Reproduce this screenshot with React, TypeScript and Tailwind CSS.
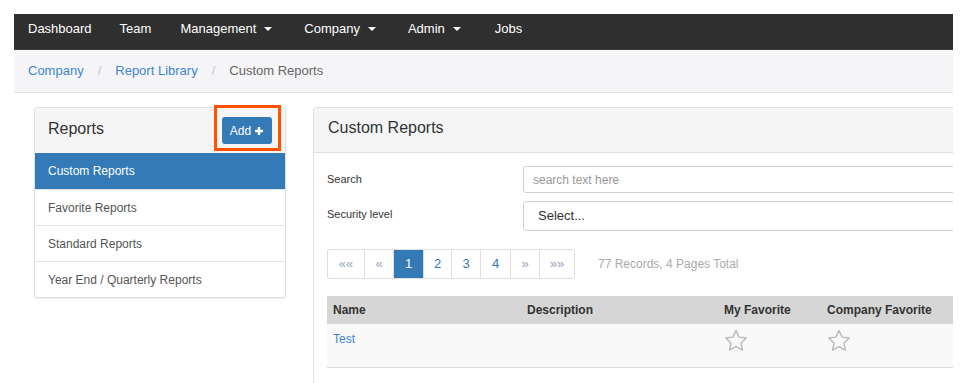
import { ReactNode } from 'react';

const font = { fontFamily: '"Liberation Sans", Arial, sans-serif' };

function Caret() {
  return (
    <span className="ml-[8px] inline-block h-0 w-0 border-x-[4px] border-t-[4px] border-x-transparent border-t-white align-middle" />
  );
}

function NavItem({ children, caret = false, className = '' }: { children: ReactNode; caret?: boolean; className?: string }) {
  return (
    <span className={`flex items-center text-[13px] text-white ${className}`}>
      {children}
      {caret && <Caret />}
    </span>
  );
}

function Star() {
  return (
    <svg width="24" height="22" viewBox="0 0 24 22" fill="none">
      <path
        d="M12 1.5l3.1 6.6 7.2.9-5.3 5 1.4 7.1L12 17.6l-6.4 3.5L7 14l-5.3-5 7.2-.9z"
        stroke="#b9b9b9"
        strokeWidth="1.4"
        strokeLinejoin="round"
      />
    </svg>
  );
}

const pages = [
  { label: '««', w: 'w-[36px]', kind: 'arrow' },
  { label: '«', w: 'w-[29px]', kind: 'arrow' },
  { label: '1', w: 'w-[30px]', kind: 'active' },
  { label: '2', w: 'w-[28px]', kind: 'num' },
  { label: '3', w: 'w-[29px]', kind: 'num' },
  { label: '4', w: 'w-[30px]', kind: 'num' },
  { label: '»', w: 'w-[29px]', kind: 'arrow' },
  { label: '»»', w: 'w-[35px]', kind: 'arrow' },
];

const sideItems = ['Custom Reports', 'Favorite Reports', 'Standard Reports', 'Year End / Quarterly Reports'];

export default function App() {
  return (
    <div className="h-[383px] w-[977px] overflow-hidden bg-white" style={font}>
      <div className="ml-[14px] mt-[14px] w-[939px] overflow-hidden">
        {/* top nav */}
        <div className="flex h-[36px] items-start border-b border-[#3c3c3c] bg-[#2f2f2f] pl-[14px] pt-[5px]">
          <NavItem>Dashboard</NavItem>
          <NavItem className="ml-[28px]">Team</NavItem>
          <NavItem className="ml-[29px]" caret>Management</NavItem>
          <NavItem className="ml-[32px]" caret>Company</NavItem>
          <NavItem className="ml-[32px]" caret>Admin</NavItem>
          <NavItem className="ml-[34px]">Jobs</NavItem>
        </div>

        {/* breadcrumb */}
        <div className="flex h-[43px] items-center border-b border-[#e2e2e4] bg-[#f5f5f7] pl-[14px] text-[13px]">
          <span className="text-[#3d85d6]">Company</span>
          <span className="px-[14px] text-[#c8c8c8]">/</span>
          <span className="text-[#3d85d6]">Report Library</span>
          <span className="px-[14px] text-[#c8c8c8]">/</span>
          <span className="text-[#666]">Custom Reports</span>
        </div>

        <div className="flex items-start pl-[20px] pt-[14px]">
          {/* left panel */}
          <div className="w-[252px] shrink-0 rounded-[3px] border border-[#e0e0e0] shadow-[0_1px_2px_rgba(0,0,0,0.08)]">
            <div className="relative flex h-[45px] items-center justify-between rounded-t-[3px] bg-[#f5f5f5] pb-[4px] pl-[13px] pr-[13px]">
              <span className="text-[16px] text-[#333]">Reports</span>
              <button className="mt-[4px] flex h-[27px] w-[50px] items-center justify-center gap-[3px] rounded-[3px] bg-[#337ab7] text-[12px] text-white">
                Add
                <svg width="10" height="10" viewBox="0 0 10 10">
                  <path d="M5 1v8M1 5h8" stroke="white" strokeWidth="2.4" />
                </svg>
              </button>
              <div className="absolute right-[4px] top-[-3px] h-[46px] w-[67px] border-[3px] border-[#ff5100]" />
            </div>
            {sideItems.map((item, i) => (
              <div
                key={item}
                className={`flex items-center pl-[13px] text-[12px] ${
                  i === 0
                    ? 'h-[36px] bg-[#337ab7] text-white'
                    : 'h-[36px] border-t border-[#e4e4e4] bg-white text-[#555]'
                } ${i === sideItems.length - 1 ? 'rounded-b-[3px]' : ''}`}
              >
                {item}
              </div>
            ))}
          </div>

          {/* right panel */}
          <div className="ml-[27px] h-[300px] w-[700px] shrink-0 rounded-[3px] border border-[#e0e0e0]">
            <div className="flex h-[45px] items-center border-b border-[#e0e0e0] bg-[#f5f5f5] pb-[4px] pl-[14px]">
              <span className="text-[16px] text-[#333]">Custom Reports</span>
            </div>
            <div className="pl-[13px] pt-[13px]">
              <div className="flex h-[27px] items-center">
                <span className="w-[196px] text-[11px] text-[#333]">Search</span>
                <div className="flex h-[27px] flex-1 items-center rounded-[3px] border border-[#d0d0d0] pl-[9px] text-[12px] text-[#999]">
                  search text here
                </div>
              </div>
              <div className="mt-[8px] flex h-[30px] items-center">
                <span className="mb-[4px] w-[196px] text-[11px] text-[#333]">Security level</span>
                <div className="flex h-[30px] flex-1 items-center rounded-[3px] border border-[#d0d0d0] pl-[14px] text-[13px] text-[#333]">
                  Select...
                </div>
              </div>

              <div className="mt-[18px] flex items-center">
                <div className="flex h-[30px] rounded-[3px] border border-[#dedede]">
                  {pages.map((p, i) => (
                    <div
                      key={i}
                      className={`flex items-center justify-center ${p.w} ${
                        i > 0 ? 'border-l border-[#dedede]' : ''
                      } ${
                        p.kind === 'active'
                          ? 'bg-[#337ab7] text-[13px] text-white'
                          : p.kind === 'num'
                          ? 'text-[13px] text-[#337ab7]'
                          : 'text-[13px] text-[#93a7bd]'
                      }`}
                    >
                      {p.label}
                    </div>
                  ))}
                </div>
                <span className="ml-[23px] text-[12px] text-[#aaa]">77 Records, 4 Pages Total</span>
              </div>

              <div className="mt-[17px]">
                <div className="flex h-[28px] items-center bg-[#d6d6d6] text-[12px] font-bold text-[#333]">
                  <span className="w-[200px] pl-[6px]">Name</span>
                  <span className="w-[197px]">Description</span>
                  <span className="w-[103px]">My Favorite</span>
                  <span className="whitespace-nowrap">Company Favorite</span>
                </div>
                <div className="flex h-[44px] items-start border-b border-[#dcdcdc] bg-[#f9f9f9] text-[12px]">
                  <span className="mt-[6px] w-[200px] pl-[6px] text-[#3d85d6]">Test</span>
                  <span className="w-[197px]" />
                  <span className="mt-[5px] w-[103px]">
                    <Star />
                  </span>
                  <span className="mt-[5px]">
                    <Star />
                  </span>
                </div>
              </div>
            </div>
          </div>
        </div>
      </div>
    </div>
  );
}
